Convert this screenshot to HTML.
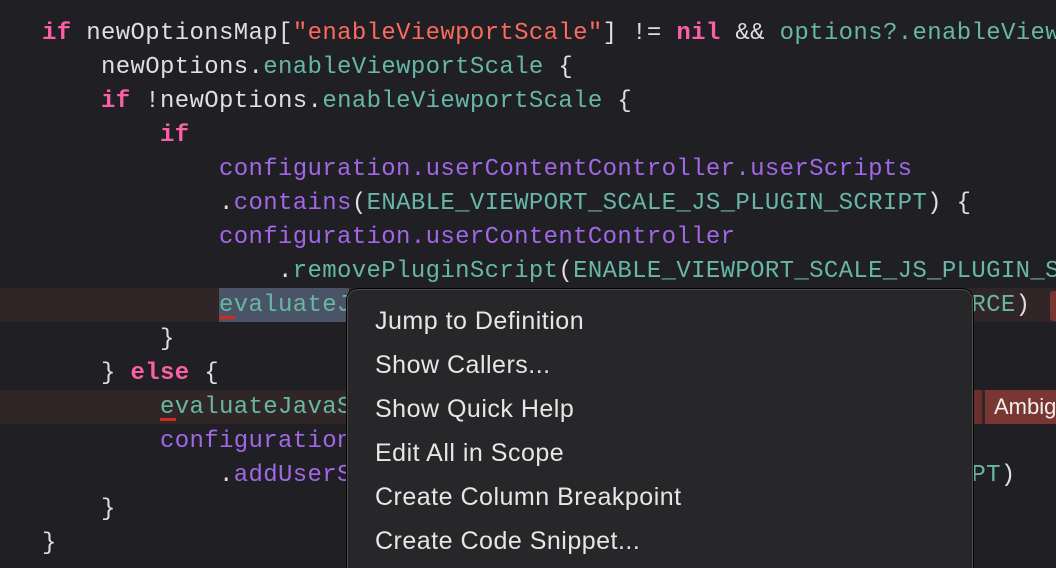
<!DOCTYPE html>
<html><head><meta charset="utf-8"><style>
html,body{margin:0;width:1056px;height:568px;overflow:hidden;}
body{background:#1f1f24;position:relative;font-family:"Liberation Mono",monospace;}
.row{position:absolute;left:0;width:1056px;height:34px;}
.line{position:absolute;left:42px;height:34px;line-height:34px;font-size:24px;letter-spacing:0.35px;white-space:pre;color:#dfdfe0;}
.k{color:#fc5fa3;font-weight:bold}.s{color:#fc6a5d}.t{color:#67b7a4}.p{color:#a167e6}
.menu{position:absolute;left:347px;top:289px;width:624px;height:290px;background:#272729;border:1px solid #4e4e50;border-radius:11px;box-shadow:0 0 0 1px #000;}
.mi{position:absolute;left:27px;font-family:"Liberation Sans",sans-serif;font-size:25px;color:#e6e6e6;line-height:30px;letter-spacing:0.5px}
</style></head><body>
<div class="row" style="top:288px;background:#302628"></div>
<div class="row" style="top:390px;background:#302628"></div>
<div style="position:absolute;left:219px;top:288px;width:130px;height:34px;background:#4b5466"></div>
<div style="position:absolute;left:219px;top:316px;width:16px;height:3px;background:#d2291e"></div>
<div style="position:absolute;left:160px;top:418px;width:16px;height:3px;background:#d2291e"></div>
<div style="position:absolute;left:1050px;top:291px;width:6px;height:30px;background:#7a3632;border-radius:3px 0 0 3px"></div>
<div style="position:absolute;left:972px;top:390px;width:10px;height:34px;background:#6a2e2c"></div>
<div style="position:absolute;left:985px;top:390px;width:71px;height:34px;overflow:hidden;background:#7a3632;color:#f0f0f0;font-family:'Liberation Sans',sans-serif;font-size:22px;line-height:34px;padding-left:9px;box-sizing:border-box">Ambig</div>
<div class="line" style="top:17px"><span class="k">if</span> newOptionsMap[<span class="s">"enableViewportScale"</span>] != <span class="k">nil</span> &amp;&amp; <span class="t">options?.enableView</span></div>
<div class="line" style="top:51px">    newOptions.<span class="t">enableViewportScale</span> {</div>
<div class="line" style="top:85px">    <span class="k">if</span> !newOptions.<span class="t">enableViewportScale</span> {</div>
<div class="line" style="top:119px">        <span class="k">if</span></div>
<div class="line" style="top:153px">            <span class="p">configuration.userContentController.userScripts</span></div>
<div class="line" style="top:187px">            .<span class="p">contains</span>(<span class="t">ENABLE_VIEWPORT_SCALE_JS_PLUGIN_SCRIPT</span>) {</div>
<div class="line" style="top:221px">            <span class="p">configuration.userContentController</span></div>
<div class="line" style="top:255px">                .<span class="t">removePluginScript</span>(<span class="t">ENABLE_VIEWPORT_SCALE_JS_PLUGIN_S</span></div>
<div class="line" style="top:289px">            <span class="t">evaluateJavaScript(NOT_ENABLE_VIEWPORT_SCALE_JS_SOURCE</span>)</div>
<div class="line" style="top:323px">        }</div>
<div class="line" style="top:357px">    } <span class="k">else</span> {</div>
<div class="line" style="top:391px">        <span class="t">evaluateJavaScript(ENABLE_VIEWPORT_SCALE_JS_SOURCE)</span></div>
<div class="line" style="top:425px">        <span class="p">configuration.userContentController</span></div>
<div class="line" style="top:459px">            .<span class="p">addUserScript</span>(<span class="t">ENABLE_VIEWPORT_SCALE_JS_PLUGIN_SCRIPT</span>)</div>
<div class="line" style="top:493px">    }</div>
<div class="line" style="top:527px">}</div>
<div class="menu">
<div class="mi" style="top:16px">Jump to Definition</div>
<div class="mi" style="top:60px">Show Callers...</div>
<div class="mi" style="top:104px">Show Quick Help</div>
<div class="mi" style="top:148px">Edit All in Scope</div>
<div class="mi" style="top:192px">Create Column Breakpoint</div>
<div class="mi" style="top:236px">Create Code Snippet...</div>
</div>
</body></html>
